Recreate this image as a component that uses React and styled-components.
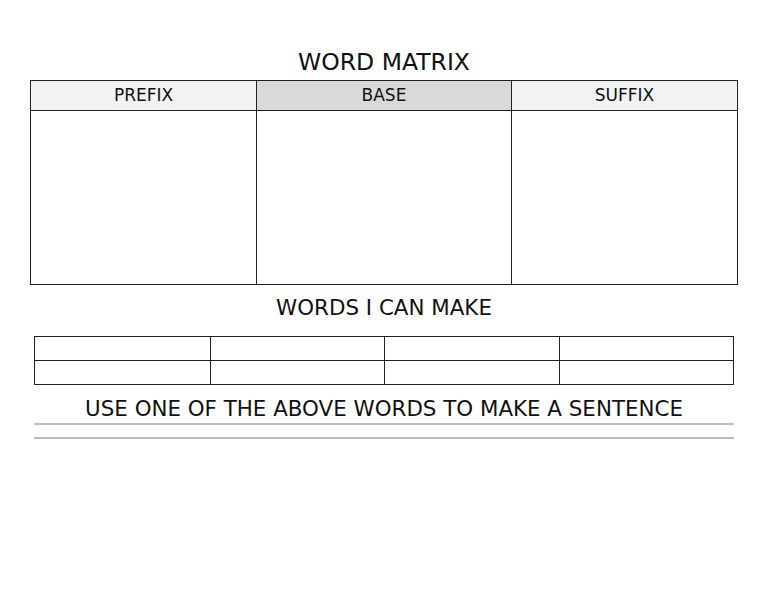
import React from 'react';
import styled, { createGlobalStyle } from 'styled-components';

const GlobalStyle = createGlobalStyle`
    html, body {
        margin: 0;
        padding: 0;
        background: #fff;
    }
    body {
        font-family: "DejaVu Sans", "Liberation Sans", sans-serif;
        color: #111;
    }
`;

const Page = styled.div`
    width: 768px;
    height: 594px;
    padding: 47px 30px 0;
    box-sizing: border-box;
    display: flex;
    flex-direction: column;
`;

const Title = styled.h1`
    margin: 0;
    font-weight: normal;
    text-align: center;
    white-space: nowrap;
    font-size: ${p => p.size || 22}px;
    line-height: ${p => p.lh || 30}px;
`;

const Matrix = styled.div`
    display: grid;
    grid-template-columns: 225px 255px 226px;
    grid-template-rows: 30px 173px;
    border: 1px solid #222;
    margin-top: 3px;
    width: max-content;
`;

const HeadCell = styled.div`
    background: ${p => (p.dark ? '#d9d9d9' : '#f2f2f2')};
    border-bottom: 1px solid #222;
    border-left: ${p => (p.first ? 'none' : '1px solid #222')};
    display: flex;
    align-items: center;
    justify-content: center;
    font-size: 17px;
    padding-bottom: 1px;
`;

const BodyCell = styled.div`
    border-left: ${p => (p.first ? 'none' : '1px solid #222')};
`;

const WordsTable = styled.div`
    margin: 5px 4px 0;
    display: grid;
    grid-template-columns: repeat(4, 1fr);
    grid-auto-rows: 24px;
    border: 1px solid #222;
    border-bottom: none;
`;

const WordCell = styled.div`
    border-bottom: 1px solid #222;
    border-left: ${p => (p.first ? 'none' : '1px solid #222')};
`;

const Line = styled.div`
    margin: 0 4px;
    height: 2px;
    background: #bdbdbd;
    margin-top: ${p => p.gap}px;
`;

const cols = ['PREFIX', 'BASE', 'SUFFIX'];

export default function App() {
    return (
        <Page>
            <GlobalStyle />
            <Title size={23.5} lh={30}>WORD MATRIX</Title>
            <Matrix>
                {cols.map((c, i) => (
                    <HeadCell key={c} first={i === 0} dark={c === 'BASE'}>{c}</HeadCell>
                ))}
                {cols.map((c, i) => (
                    <BodyCell key={c} first={i === 0} />
                ))}
            </Matrix>
            <Title size={21.4} lh={46}>WORDS I CAN MAKE</Title>
            <WordsTable>
                {Array.from({ length: 8 }).map((_, i) => (
                    <WordCell key={i} first={i % 4 === 0} />
                ))}
            </WordsTable>
            <Title size={21.4} lh={48}>USE ONE OF THE ABOVE WORDS TO MAKE A SENTENCE</Title>
            <Line gap={-10} />
            <Line gap={12} />
        </Page>
    );
}
